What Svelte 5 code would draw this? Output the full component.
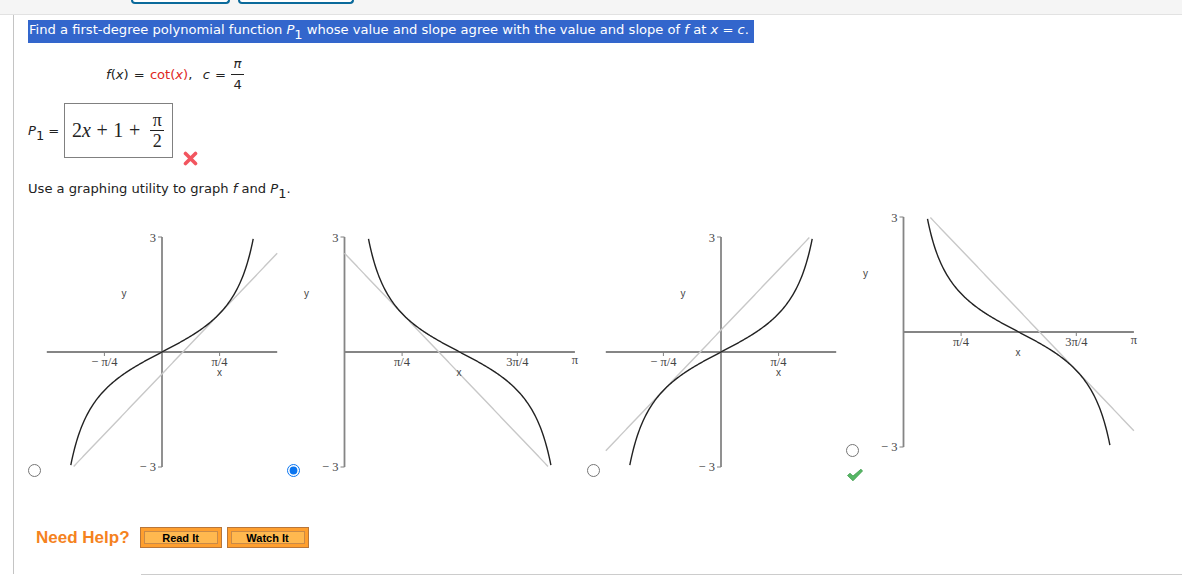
<script lang="ts">
  const XS = 230.4 / Math.PI;
  const YS = 38.4;
  const Q = Math.PI / 4;

  const tan = (x: number) => Math.tan(x);
  const cot = (x: number) => 1 / Math.tan(x);

  function plot(f: (x: number) => number, from: number, to: number) {
    const pts: string[] = [];
    for (let i = 0; i <= 240; i++) {
      const x = from + ((to - from) * i) / 240;
      const y = f(x);
      if (Math.abs(y) <= 3.001) pts.push(`${(x * XS).toFixed(2)},${(-y * YS).toFixed(2)}`);
    }
    return pts.join(" ");
  }

  type Graph = {
    kind: "tan" | "cot";
    at: number;
    checked?: boolean;
    raised?: boolean;
  };

  const graphs: Graph[] = [
    { kind: "tan", at: Q },
    { kind: "cot", at: Q, checked: true },
    { kind: "tan", at: -Q },
    { kind: "cot", at: 3 * Q, raised: true },
  ];

  function view(g: Graph) {
    const isTan = g.kind === "tan";
    const f = isTan ? tan : cot;
    const from = isTan ? -Math.PI / 2 : 0;
    const to = isTan ? Math.PI / 2 : Math.PI;
    const slope = isTan ? 2 : -2;
    const y0 = f(g.at);
    const line = (x: number) => y0 + slope * (x - g.at);
    return {
      isTan,
      w: isTan ? 246 : 287,
      ox: isTan ? 121 : 44.5,
      curve: plot(f, from, to),
      tangent: plot(line, from, to),
      ticks: isTan
        ? [{ x: -Q, t: "− π/4" }, { x: Q, t: "π/4" }]
        : [{ x: Q, t: "π/4" }, { x: 3 * Q, t: "3π/4" }],
    };
  }
</script>

<div class="topbar">
  <span class="tab one"></span>
  <span class="tab two"></span>
</div>

<main>
  <p class="prompt">
    Find a first-degree polynomial function <i>P</i><sub>1</sub> whose value and slope agree with the value and slope of <i>f</i> at <i>x</i> = <i>c</i>.
  </p>

  <div class="formula">
    <span class="expr"><i>f</i>(<i>x</i>) = <span class="red">cot(<i>x</i>)</span>, &nbsp;<i>c</i> = </span>
    <span class="frac small"><i>π</i><b></b><span>4</span></span>
  </div>

  <div class="answer-row">
    <span class="lhs"><i>P</i><sub>1</sub> = </span>
    <div class="answer">
      <span class="sum">2<i>x</i> + 1 + </span>
      <span class="frac big"><span>π</span><b></b><span>2</span></span>
    </div>
    <svg class="wrong" width="15" height="15" viewBox="0 0 15 15">
      <path d="M2.5 2.5 L12.5 12.5 M12.5 2.5 L2.5 12.5" stroke="#f2555f" stroke-width="3.6" stroke-linecap="round" />
    </svg>
  </div>

  <p class="use">Use a graphing utility to graph <i>f</i> and <i>P</i><sub>1</sub>.</p>

  <div class="choices">
    {#each graphs as g}
      {@const v = view(g)}
      <div class="choice" class:raised={g.raised}>
        <div class="option">
          <input type="radio" name="graph" checked={g.checked} />
          <svg width={v.w} height="247" viewBox="0 0 {v.w} 247">
            <g transform="translate({v.ox} 122)">
              <line class="axis" x1={v.isTan ? -115.2 : 0} y1="0" x2={v.isTan ? 115.2 : 230.4} y2="0" />
              <line class="axis" x1="0" y1="-115" x2="0" y2="115" />
              <line class="thin" x1="-4" y1="-115" x2="0" y2="-115" />
              <line class="thin" x1="-4" y1="115" x2="0" y2="115" />
              <polyline class="tangent" points={v.tangent} />
              <polyline class="curve" points={v.curve} />
              {#each v.ticks as t}
                <line class="thin" x1={t.x * XS} y1="0" x2={t.x * XS} y2="4" />
                <text class="serif" x={t.x * XS} y="14" text-anchor="middle">{t.t}</text>
              {/each}
              <text class="serif" x="-6" y="-110" text-anchor="end">3</text>
              <text class="serif" x="-6" y="119" text-anchor="end">− 3</text>
              {#if !v.isTan}
                <text class="serif" x="230.4" y="12" text-anchor="middle">π</text>
              {/if}
              <text class="sans" x="-38" y="-55" text-anchor="middle">y</text>
              <text class="sans" x={v.isTan ? Q * XS : 114.5} y="24" text-anchor="middle">x</text>
            </g>
          </svg>
        </div>
        {#if g.raised}
          <svg class="right" width="18" height="14" viewBox="0 0 18 14">
            <path d="M1.5 7.5 L4 5.3 L7 8 L15 1.2 L16.5 3 L7 12.8 Z" fill="#56b765" stroke="#3f9c4c" stroke-width="0.8" stroke-linejoin="round" />
          </svg>
        {/if}
      </div>
    {/each}
  </div>

  <div class="help">
    <span class="need">Need Help?</span>
    <button>Read It</button>
    <button>Watch It</button>
  </div>
</main>
<div class="rule"></div>

<style>
  :global(body) {
    background: #fff;
    overflow: hidden;
  }

  .topbar {
    height: 14px;
    background: #f5f5f5;
    border-bottom: 1px solid #e2e2e2;
    display: flex;
    gap: 8px;
    padding-left: 131px;
    box-sizing: content-box;
  }

  .tab {
    height: 2px;
    border: 2px solid #0b6a9b;
    border-top: 0;
    border-radius: 0 0 4px 4px;
    background: #fff;
  }
  .tab.one { width: 95px; }
  .tab.two { width: 112px; }

  main {
    margin-left: 13px;
    border-left: 1px solid #c4c4c4;
    padding: 5px 0 0 14px;
    height: 559px;
    box-sizing: border-box;
    font: 13.1px "DejaVu Sans", Verdana, sans-serif;
    color: #222;
  }

  p { margin: 0; }

  sub {
    font-size: 13px;
    line-height: 0;
    vertical-align: -5px;
    font-style: normal;
  }

  .prompt {
    display: inline-block;
    width: max-content;
    background: #3366cc;
    color: #fff;
    height: 23px;
    line-height: 20px;
    padding: 0 5px 0 1px;
  }

  .formula {
    display: flex;
    align-items: center;
    gap: 5px;
    margin: 12px 0 0 78px;
    height: 38px;
  }

  .expr { word-spacing: 1px; }

  .red { color: #e0281e; }

  .frac {
    display: inline-flex;
    flex-direction: column;
    align-items: center;
    line-height: 1;
  }

  .frac b {
    display: block;
    background: #222;
    height: 1px;
    align-self: stretch;
  }

  .frac.small { width: 13px; gap: 3px; }
  .frac.big { width: 14px; gap: 1px; margin-left: 10px; font-size: 18px; }

  .answer-row {
    display: flex;
    align-items: center;
    margin-top: 10px;
  }

  .lhs { width: 36px; flex: none; }

  .answer {
    width: 100px;
    height: 53px;
    padding-left: 7px;
    border: 1px solid #808080;
    display: flex;
    align-items: center;
    font: 20px "Liberation Serif", serif;
    color: #222;
  }

  .sum { word-spacing: 0.6px; }

  .wrong {
    align-self: flex-end;
    margin: 0 0 -8px 10px;
  }

  .use { margin-top: 21px; line-height: 20px; }

  .choices {
    display: flex;
    align-items: flex-start;
    margin-top: 11px;
  }

  .choice { padding-top: 20px; }
  .choice.raised { padding-top: 0; }

  .option {
    display: flex;
    align-items: flex-end;
  }

  input[type="radio"] {
    margin: 0;
    width: 13px;
    height: 13px;
    flex: none;
    accent-color: #0a75f0;
  }

  .right { display: block; margin: 11px 0 0 0; }

  text { fill: #444; }
  .serif { font: 12.5px "Liberation Serif", serif; }
  .sans { font: 10px "Liberation Sans", sans-serif; }

  .axis { stroke: #858585; stroke-width: 1.8; }
  .thin { stroke: #808080; stroke-width: 1; }
  .curve, .tangent { fill: none; stroke-linejoin: round; }
  .curve { stroke: #222; stroke-width: 1.4; }
  .tangent { stroke: #c8c8c8; stroke-width: 1.4; }

  .help {
    display: flex;
    align-items: center;
    gap: 5px;
    margin: 45px 0 0 8px;
  }

  .need {
    font: bold 17px "Liberation Sans", Arial, sans-serif;
    color: #f58220;
    margin-right: 5px;
  }

  button {
    width: 82px;
    height: 21px;
    padding: 0;
    background: #ffb84f;
    border: 1px solid #b8763a;
    box-shadow: inset 0 0 0 3px #ff9f2e, inset 0 0 0 4px #c98a48;
    font: bold 11px "Liberation Sans", Arial, sans-serif;
    color: #000;
  }

  .rule {
    margin-left: 141px;
    height: 1px;
    background: #ccc;
  }
</style>
